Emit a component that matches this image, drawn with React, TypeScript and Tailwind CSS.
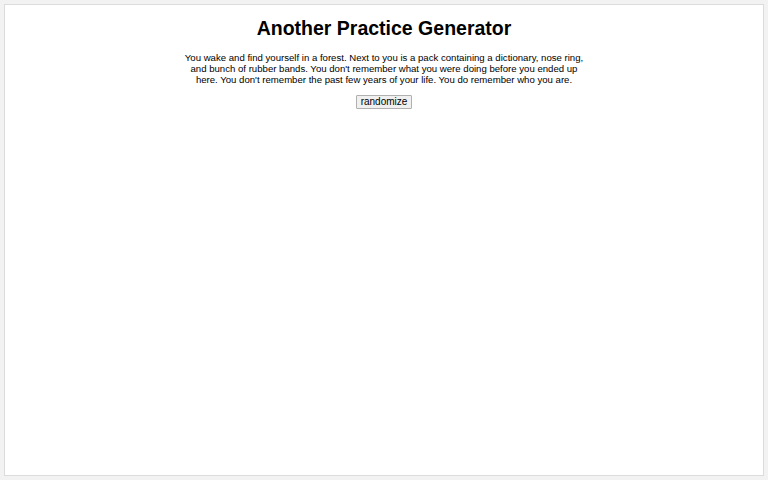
export default function App() {
  return (
    <div className="min-h-[480px] bg-[#f2f2f2] p-[4px]" style={{ fontFamily: '"Liberation Sans", Arial, sans-serif' }}>
      <div className="h-[472px] bg-white border border-[#dcdcdc] flex flex-col items-center text-black">
        <h1 className="mt-[12px] text-[19.5px] leading-[22px] font-bold">Another Practice Generator</h1>
        <p className="mt-[13px] w-[404px] text-center text-[9.6px] leading-[11px]">
          You wake and find yourself in a forest. Next to you is a pack containing a dictionary, nose ring, and bunch of rubber bands. You don't remember what you were doing before you ended up here. You don't remember the past few years of your life. You do remember who you are.
        </p>
        <button className="mt-[10px] px-[4px] h-[14px] text-[10px] leading-[12px] bg-[#f0f0f0] border border-[#b0b0b0] rounded-[1px]">
          randomize
        </button>
      </div>
    </div>
  );
}
